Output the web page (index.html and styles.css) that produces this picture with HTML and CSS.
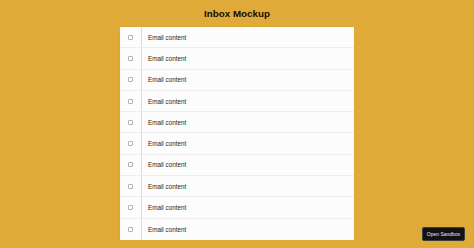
FILE: index.html
```html
<!DOCTYPE html>
<html lang="en">
<head>
    <meta charset="utf-8">
    <meta name="viewport" content="width=device-width, initial-scale=1.0">
    <title>Inbox Mockup</title>
    <link rel="stylesheet" href="styles.css">
</head>
<body>
    <h1 class="title">Inbox Mockup</h1>
    <div class="inbox">
        <div class="row"><div class="check"><input type="checkbox"></div><div class="content">Email content</div></div>
        <div class="row"><div class="check"><input type="checkbox"></div><div class="content">Email content</div></div>
        <div class="row"><div class="check"><input type="checkbox"></div><div class="content">Email content</div></div>
        <div class="row"><div class="check"><input type="checkbox"></div><div class="content">Email content</div></div>
        <div class="row"><div class="check"><input type="checkbox"></div><div class="content">Email content</div></div>
        <div class="row"><div class="check"><input type="checkbox"></div><div class="content">Email content</div></div>
        <div class="row"><div class="check"><input type="checkbox"></div><div class="content">Email content</div></div>
        <div class="row"><div class="check"><input type="checkbox"></div><div class="content">Email content</div></div>
        <div class="row"><div class="check"><input type="checkbox"></div><div class="content">Email content</div></div>
        <div class="row"><div class="check"><input type="checkbox"></div><div class="content">Email content</div></div>
    </div>
    <button class="sandbox">Open Sandbox</button>
</body>
</html>
```

FILE: styles.css
```css
body{
    margin: 0;
    background-color: rgb(223,170,55);
    font-family: "Liberation Sans", Arial, sans-serif;
    display: flex;
    flex-direction: column;
    align-items: center;
}
.title{
    margin: 0;
    height: 27px;
    line-height: 28px;
    font-size: 9.8px;
    font-weight: bold;
    color: rgb(20,14,4);
}
.inbox{
    width: 234px;
    background-color: rgb(252,252,252);
    box-shadow: 0 0 1px rgba(0,0,0,0.12);
}
.row{
    display: flex;
    height: 21.3px;
    box-sizing: border-box;
    border-bottom: 1px solid rgb(238,238,238);
}
.row:last-child{
    border-bottom: none;
}
.check{
    width: 21px;
    display: flex;
    align-items: center;
    justify-content: center;
    border-right: 1px solid rgb(218,218,218);
}
.check input{
    appearance: none;
    margin: 0;
    width: 5px;
    height: 5px;
    box-sizing: border-box;
    border: 1px solid rgb(178,178,178);
    border-radius: 1px;
    background-color: white;
}
.content{
    flex: 1;
    display: flex;
    align-items: center;
    padding-left: 6px;
    font-size: 6.3px;
    color: rgb(30,30,30);
}
.sandbox{
    position: fixed;
    right: 9px;
    bottom: 7px;
    width: 43px;
    height: 14px;
    padding: 0;
    background-color: rgb(18,18,20);
    color: rgb(235,235,235);
    border: 1px solid rgb(60,60,60);
    border-radius: 2px;
    font-family: "Liberation Sans", Arial, sans-serif;
    font-size: 5px;
}
```
